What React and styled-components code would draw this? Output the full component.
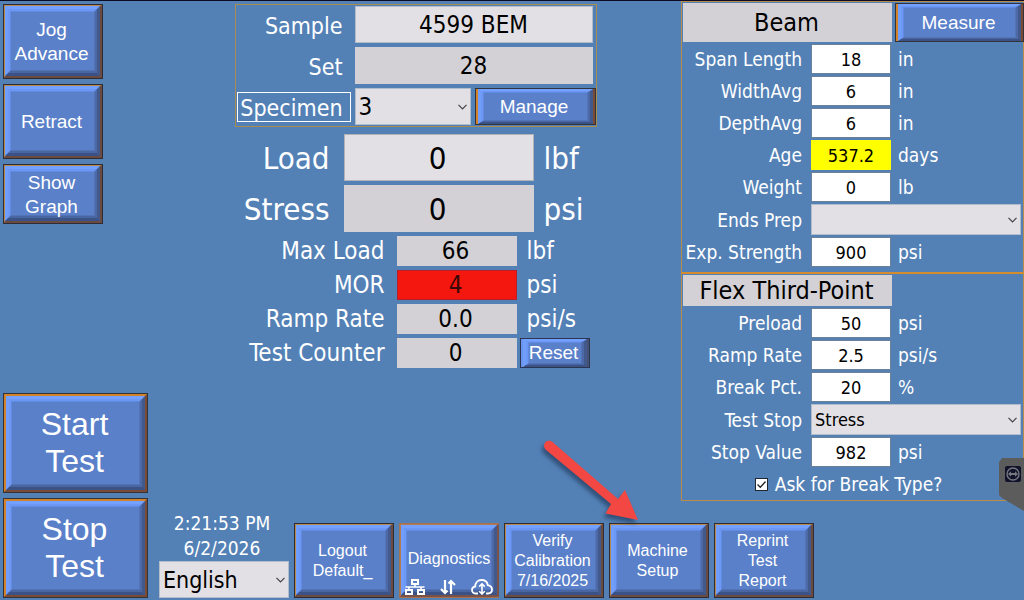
import React from "react";
import styled, { createGlobalStyle } from "styled-components";

const ui = `Tahoma, "DejaVu Sans Condensed", "Noto Sans", sans-serif`;
const sans = `Arial, "Liberation Sans", sans-serif`;

const Global = createGlobalStyle`
  *, *::before, *::after { box-sizing: border-box; }
  body { margin: 0; background: #5381b6; color: #fff; font-family: ${ui}; }
  input, select, button, output { font-family: inherit; margin: 0; }
`;

const Page = styled.div`
  display: flex;
  min-height: 100vh;
  border-top: 1px solid #0b0b26;
`;

const Side = styled.nav`
  display: flex;
  flex-direction: column;
  flex: none;
  gap: 5px;
  padding: 3px 0 2px 3px;
`;

const Spacer = styled.div`
  flex: 1;
`;

const Main = styled.main`
  display: flex;
  flex-direction: column;
  justify-content: space-between;
  flex: 1;
  min-width: 0;
  padding-left: 4px;
`;

const Top = styled.div`
  display: flex;
`;

/* ---------- bevelled button ---------- */

const edges = {
  bright: { lt: "#d3822c", rb: "#7a4a35", frame: "#33333a" },
  muted: { lt: "#b8884f", rb: "#6b4a42", frame: "#2f2c33" },
  glow: { lt: "#b47a50", rb: "#7c5148", frame: "#a5714f" },
  plain: { lt: "#6a95ee", rb: "#465273", frame: "#2b3550" },
};

/* Bevel rings from the rim inwards: border width, then top, right, bottom, left. */
const rings = [
  { width: "3px", slim: "2px 3px", color: "#74a1ff #42598b #3a5286 #719dfb" },
  { width: "2px", slim: "1px 2px", color: "#6b98f5 #4d69a8 #4a66a2 #6c98f6" },
  { width: "1px", slim: "1px", color: "#628ae0 #5474b8 #5373b7 #628ae0" },
];

const Frame = styled.button`
  display: flex;
  flex: none;
  width: ${(p) => p.$w}px;
  height: ${(p) => p.$h}px;
  padding: 0;
  border: 1px solid ${(p) => edges[p.$edge].frame};
  background: #5a80c9;
  color: #fff;
  font-family: ${sans};
  font-size: ${(p) => p.$size}px;
  line-height: ${(p) => p.$line}px;
  cursor: pointer;
`;

const Rim = styled.span`
  display: flex;
  flex: 1;
  border-style: solid;
  border-width: ${(p) => (p.$slim ? "0 2px" : p.$edge === "bright" ? "2px" : "1px 2px 2px 1px")};
  border-color: ${(p) => {
    const e = edges[p.$edge];
    return `${e.lt} ${e.rb} ${e.rb} ${e.lt}`;
  }};
`;

const Ring = styled.span`
  display: flex;
  flex: 1;
  border-style: solid;
  border-width: ${(p) => (p.$slim ? rings[p.$n].slim : rings[p.$n].width)};
  border-color: ${(p) => rings[p.$n].color};
`;

const Caption = styled.span`
  flex: 1;
  display: flex;
  flex-direction: column;
  align-items: center;
  justify-content: center;
  white-space: pre-line;
  text-align: center;
  margin: -4px;
  padding: ${(p) => (p.$flat ? "0 2px 0 0" : "2px 2px 0 0")};
`;

function BevelButton({ w, h, size = 19, line = 24, edge = "muted", slim, children }) {
  return (
    <Frame type="button" $w={w} $h={h} $size={size} $line={line} $edge={edge}>
      <Rim $edge={edge} $slim={slim}>
        <Ring $n={0} $slim={slim}>
          <Ring $n={1} $slim={slim}>
            <Ring $n={2} $slim={slim}>
              <Caption $flat={edge === "bright" || slim}>{children}</Caption>
            </Ring>
          </Ring>
        </Ring>
      </Rim>
    </Frame>
  );
}

/* ---------- drop-down ---------- */

const SelectWrap = styled.span`
  position: relative;
  display: flex;
  flex: 1;
  min-width: 0;
  height: ${(p) => p.$h}px;
  grid-column: ${(p) => (p.$span ? "span 2" : "auto")};
  margin-right: ${(p) => (p.$span ? 1 : 0)}px;
`;

const NativeSelect = styled.select`
  appearance: none;
  width: 100%;
  padding: 0 24px 0 3px;
  border: 1px solid #b3bccb;
  border-radius: 0;
  background: #e2e0e4;
  color: #000;
  font-size: ${(p) => p.$size}px;
`;

const Chevron = styled.svg`
  position: absolute;
  right: 4px;
  top: calc(50% - 3px);
  pointer-events: none;
`;

function Select({ id, h, size, span, label, value }) {
  return (
    <SelectWrap $h={h} $span={span}>
      <NativeSelect id={id} $size={size} aria-label={label} defaultValue={value}>
        <option>{value}</option>
      </NativeSelect>
      <Chevron width="9" height="6" viewBox="0 0 9 6" fill="none" stroke="#444" strokeWidth="1.2">
        <path d="M0.5 0.8 L4.5 4.8 L8.5 0.8" />
      </Chevron>
    </SelectWrap>
  );
}

/* ---------- centre column ---------- */

const Center = styled.section`
  display: flex;
  flex-direction: column;
  flex: 1;
  align-items: center;
  gap: 7px;
  padding: 3px 2px 0 0;
`;

const SamplePanel = styled.div`
  display: flex;
  flex-direction: column;
  gap: 4px;
  width: 362px;
  padding: 1px 0 1px 1px;
  border: 1px solid #a98c50;
`;

const SampleRow = styled.div`
  display: flex;
  align-items: center;
  gap: 4px;
  padding-right: ${(p) => (p.$flush ? 0 : 3)}px;
`;

const SampleLabel = styled.label`
  flex: none;
  width: 114px;
  height: 30px;
  padding-right: 7px;
  border: 1px solid ${(p) => (p.$boxed ? "#fff" : "transparent")};
  font-size: 23px;
  line-height: 30px;
  text-align: right;
`;

const SampleField = styled.input`
  flex: 1;
  min-width: 0;
  height: 37px;
  padding: 0;
  border: 1px solid ${(p) => (p.$light ? "#b3bccb" : "#d3d1d5")};
  background: ${(p) => (p.$light ? "#e2e0e4" : "#d3d1d5")};
  color: #000;
  font-size: 24px;
  text-align: center;
`;

const Readouts = styled.div`
  display: flex;
  flex-direction: column;
  gap: 4px;
  width: 362px;
`;

const ReadoutRow = styled.div`
  display: grid;
  grid-template-columns: ${(p) => (p.$big ? "109px 190px 1fr" : "162px 120px 1fr")};
  grid-template-rows: 100%;
  align-items: center;
  height: ${(p) => (p.$big ? 47 : 30)}px;
  font-size: ${(p) => (p.$big ? 31 : 24)}px;
  line-height: 28px;
  white-space: nowrap;
`;

const ReadoutLabel = styled.label`
  justify-self: end;
  padding-right: ${(p) => (p.$big ? 14 : 12)}px;
`;

const Readout = styled.output`
  display: flex;
  align-items: center;
  justify-content: center;
  height: 100%;
  padding-right: 2px;
  border: 1px solid ${(p) => (p.$alarm ? "#b5202a" : p.$light ? "#b3b3b8" : "#d3d1d5")};
  background: ${(p) => (p.$alarm ? "#f31710" : p.$light ? "#e2e0e4" : "#d3d1d5")};
  color: ${(p) => (p.$alarm ? "#3a0806" : "#000")};
`;

const ReadoutUnit = styled.span`
  padding-left: 10px;
`;

const ReadoutAction = styled.span`
  display: flex;
  padding-left: 3px;
`;

function ReadoutLine({ id, label, value, unit, big, light, alarm, action }) {
  return (
    <ReadoutRow $big={big}>
      <ReadoutLabel htmlFor={id} $big={big}>{label}</ReadoutLabel>
      <Readout id={id} $light={light} $alarm={alarm}>
        {value}
      </Readout>
      {action ? <ReadoutAction>{action}</ReadoutAction> : <ReadoutUnit>{unit}</ReadoutUnit>}
    </ReadoutRow>
  );
}

/* ---------- settings column ---------- */

const Settings = styled.aside`
  display: flex;
  flex-direction: column;
  flex: none;
  width: 343px;
`;

const Group = styled.section`
  display: flex;
  flex-direction: column;
  gap: 2px;
  padding: 1px 1px ${(p) => (p.$last ? 1 : 5)}px;
  border: 1px solid #b98c48;
  border-width: ${(p) => (p.$last ? "0 1px 1px" : "1px 1px 2px")};
  border-bottom-color: ${(p) => (p.$last ? "#b98c48" : "#d48c2c")};
`;

const GroupHead = styled.div`
  display: flex;
  gap: 3px;
  margin-right: -2px;
`;

const GroupTitle = styled.h2`
  flex: none;
  width: 209px;
  height: ${(p) => p.$h}px;
  margin: 0;
  padding-right: 2px;
  background: #d3d1d5;
  color: #000;
  font-size: 25px;
  font-weight: 400;
  line-height: ${(p) => p.$h}px;
  text-align: center;
`;

const Setting = styled.div`
  display: grid;
  grid-template-columns: 128px 80px 1fr;
  align-items: center;
  font-size: 19px;
  white-space: nowrap;
`;

const SettingLabel = styled.label`
  justify-self: end;
  padding-right: 9px;
`;

const SettingField = styled.input`
  width: 100%;
  height: 30px;
  padding: 0;
  border: 1px solid ${(p) => (p.$warn ? "#ffff00" : "#6b8099")};
  background: ${(p) => (p.$warn ? "#ffff00" : "#fff")};
  color: #000;
  font-size: 18px;
  text-align: center;
`;

const SettingUnit = styled.span`
  padding-left: 7px;
`;

function SettingLine({ id, label, value, unit, warn, select }) {
  return (
    <Setting>
      <SettingLabel htmlFor={id}>{label}</SettingLabel>
      {select ? (
        <Select id={id} h={31} size={18} span value={value} />
      ) : (
        <>
          <SettingField id={id} defaultValue={value} $warn={warn} />
          <SettingUnit>{unit}</SettingUnit>
        </>
      )}
    </Setting>
  );
}

const CheckRow = styled.label`
  display: flex;
  align-items: center;
  justify-content: center;
  gap: 7px;
  height: 30px;
  padding-right: 8px;
  font-size: 19px;
`;

const CheckSlot = styled.span`
  display: grid;
  place-items: center;
  & > * {
    grid-area: 1 / 1;
  }
  input:not(:checked) + svg {
    display: none;
  }
`;

const Check = styled.input`
  appearance: none;
  width: 13px;
  height: 13px;
  border: 1px solid #22262e;
  background: #fff;
`;

const CheckMark = styled.svg`
  pointer-events: none;
`;

/* ---------- bottom bar ---------- */

const Bar = styled.footer`
  display: flex;
  align-items: flex-end;
  gap: 5px;
  padding: 0 0 2px 7px;
`;

const Clock = styled.div`
  display: flex;
  flex-direction: column;
  width: 130px;
  font-size: 19px;
  line-height: 25px;
  text-align: center;
`;

const ClockText = styled.time`
  padding-right: 4px;
`;

const LanguageSlot = styled.div`
  display: flex;
  line-height: normal;
`;

const StatusIcons = styled.span`
  display: flex;
  align-items: center;
  justify-content: space-between;
  width: 88px;
  margin-top: 10px;
  margin-bottom: -1px;
`;

const DiagnosticsBody = styled.span`
  display: flex;
  flex-direction: column;
  align-items: center;
  margin-top: 20px;
  padding-left: 2px;
`;

const Pointed = styled.div`
  position: relative;
  display: flex;
`;

const Arrow = styled.svg`
  position: absolute;
  left: -72px;
  bottom: 72px;
  pointer-events: none;
  filter: drop-shadow(-2px 4px 2px rgba(20, 40, 70, 0.55));
`;

const RemoteTab = styled.svg`
  position: fixed;
  right: 0;
  top: 458px;
`;

function NetworkIcon() {
  return (
    <svg width="20" height="16" viewBox="0 0 20 16" fill="none" stroke="#fff" strokeWidth="2">
      <path d="M7 1h6v4h-6z M1 11h6v4h-6z M13 11h6v4h-6z" />
      <path d="M10 5v3 M0.5 8h19 M4 8v3 M16 8v3" strokeWidth="1.5" />
    </svg>
  );
}

function TransferIcon() {
  return (
    <svg width="18" height="16" viewBox="0 0 18 16" fill="none" stroke="#fff" strokeWidth="2.2">
      <path d="M6 1v12.5 M2 10l4 4 2.500-2.500" />
      <path d="M12 15V2.500 M9.500 4.500l2.500-2.500 4 4" />
    </svg>
  );
}

function CloudIcon() {
  return (
    <svg width="22" height="16" viewBox="0 0 22 16" fill="none" stroke="#fff" strokeWidth="1.8">
      <path d="M7 14.500H5C2.500 14.500 1 13 1 11c0-2 1.300-3.200 3.200-3.500C4.200 3.800 6.800 1 10.500 1c3.300 0 5.800 2 6.300 5.200C19.200 6.600 21 8.200 21 10.600c0 2.400-1.700 3.900-4 3.900h-2" />
      <path d="M11 5v10 M8.200 7.600L11 4.800l2.800 2.800 M8.200 12.200L11 15l2.800-2.800" strokeWidth="1.600" />
    </svg>
  );
}

const beam = [
  { id: "span", label: "Span Length", value: "18", unit: "in" },
  { id: "width", label: "WidthAvg", value: "6", unit: "in" },
  { id: "depth", label: "DepthAvg", value: "6", unit: "in" },
  { id: "age", label: "Age", value: "537.2", unit: "days", warn: true },
  { id: "weight", label: "Weight", value: "0", unit: "lb" },
  { id: "ends", label: "Ends Prep", value: "", select: true },
  { id: "strength", label: "Exp. Strength", value: "900", unit: "psi" },
];

const flex = [
  { id: "preload", label: "Preload", value: "50", unit: "psi" },
  { id: "ramp", label: "Ramp Rate", value: "2.5", unit: "psi/s" },
  { id: "break", label: "Break Pct.", value: "20", unit: "%" },
  { id: "stop", label: "Test Stop", value: "Stress", select: true },
  { id: "stopvalue", label: "Stop Value", value: "982", unit: "psi" },
];

export default function App() {
  return (
    <>
      <Global />
      <Page>
        <Side>
          <BevelButton w={100} h={75}>{"Jog\nAdvance"}</BevelButton>
          <BevelButton w={100} h={75}>Retract</BevelButton>
          <BevelButton w={100} h={60}>{"Show\nGraph"}</BevelButton>
          <Spacer />
          <BevelButton w={145} h={100} size={32} line={37} edge="bright">{"Start\nTest"}</BevelButton>
          <BevelButton w={145} h={100} size={32} line={37} edge="bright">{"Stop\nTest"}</BevelButton>
        </Side>

        <Main>
          <Top>
            <Center>
              <SamplePanel>
                <SampleRow>
                  <SampleLabel htmlFor="sample">Sample</SampleLabel>
                  <SampleField id="sample" defaultValue="4599 BEM" $light />
                </SampleRow>
                <SampleRow>
                  <SampleLabel htmlFor="set">Set</SampleLabel>
                  <SampleField id="set" defaultValue="28" />
                </SampleRow>
                <SampleRow $flush>
                  <SampleLabel htmlFor="specimen" $boxed>Specimen</SampleLabel>
                  <Select id="specimen" h={37} size={24} value="3" />
                  <BevelButton w={121} h={37} edge="bright" slim>Manage</BevelButton>
                </SampleRow>
              </SamplePanel>

              <Readouts>
                <ReadoutLine id="load" label="Load" value="0" unit="lbf" big light />
                <ReadoutLine id="stress" label="Stress" value="0" unit="psi" big />
                <ReadoutLine id="maxload" label="Max Load" value="66" unit="lbf" />
                <ReadoutLine id="mor" label="MOR" value="4" unit="psi" alarm />
                <ReadoutLine id="rate" label="Ramp Rate" value="0.0" unit="psi/s" />
                <ReadoutLine
                  id="counter"
                  label="Test Counter"
                  value="0"
                  action={<BevelButton w={70} h={30} edge="plain" slim>Reset</BevelButton>}
                />
              </Readouts>
            </Center>

            <Settings>
              <Group>
                <GroupHead>
                  <GroupTitle $h={39}>Beam</GroupTitle>
                  <BevelButton w={129} h={39} edge="bright" slim>Measure</BevelButton>
                </GroupHead>
                {beam.map((s) => (
                  <SettingLine key={s.id} {...s} />
                ))}
              </Group>
              <Group $last>
                <GroupHead>
                  <GroupTitle $h={31}>Flex Third-Point</GroupTitle>
                </GroupHead>
                {flex.map((s) => (
                  <SettingLine key={s.id} {...s} />
                ))}
                <CheckRow>
                  <CheckSlot>
                    <Check type="checkbox" defaultChecked />
                    <CheckMark width="11" height="11" viewBox="0 0 11 11" fill="none" stroke="#222" strokeWidth="1.3">
                      <path d="M1.500 5.500l2.800 2.800L9.500 2.500" />
                    </CheckMark>
                  </CheckSlot>
                  Ask for Break Type?
                </CheckRow>
              </Group>
            </Settings>
          </Top>

          <Bar>
            <Clock>
              <ClockText>2:21:53 PM</ClockText>
              <ClockText>6/2/2026</ClockText>
              <LanguageSlot>
                <Select h={37} size={23} label="Language" value="English" />
              </LanguageSlot>
            </Clock>
            <BevelButton w={100} h={75} size={16} line={20}>{"Logout\nDefault_"}</BevelButton>
            <BevelButton w={100} h={75} size={16} line={20} edge="glow">
              <DiagnosticsBody>
                Diagnostics
                <StatusIcons>
                  <NetworkIcon />
                  <TransferIcon />
                  <CloudIcon />
                </StatusIcons>
              </DiagnosticsBody>
            </BevelButton>
            <BevelButton w={100} h={75} size={16} line={20}>{"Verify\nCalibration\n7/16/2025"}</BevelButton>
            <Pointed>
              <BevelButton w={100} h={75} size={16} line={20}>{"Machine\nSetup"}</BevelButton>
              <Arrow width="108" height="90" viewBox="0 0 108 90" fill="#f24743">
                <path d="M15.500 6 Q12 3 8.500 6 Q5.500 9.500 8.500 13.500 L74 68 L68.500 77.500 L101 84 L88 54 L81 63 Z" />
              </Arrow>
            </Pointed>
            <BevelButton w={100} h={75} size={16} line={20}>{"Reprint\nTest\nReport"}</BevelButton>
          </Bar>
        </Main>
      </Page>

      <RemoteTab width="25" height="53" viewBox="0 0 25 53">
        <path d="M0 4 L3 0 H25 V53 L3 40 L0 37 Z" fill="#5c5c5c" />
        <rect x="6" y="8" width="16" height="16" rx="2" fill="#11132b" />
        <circle cx="14" cy="16" r="6" fill="none" stroke="#77777f" strokeWidth="1.400" />
        <path d="M9 16l3-2.800v1.800h4v-1.800l3 2.800-3 2.800v-1.800h-4v1.800z" fill="#77777f" />
      </RemoteTab>
    </>
  );
}
